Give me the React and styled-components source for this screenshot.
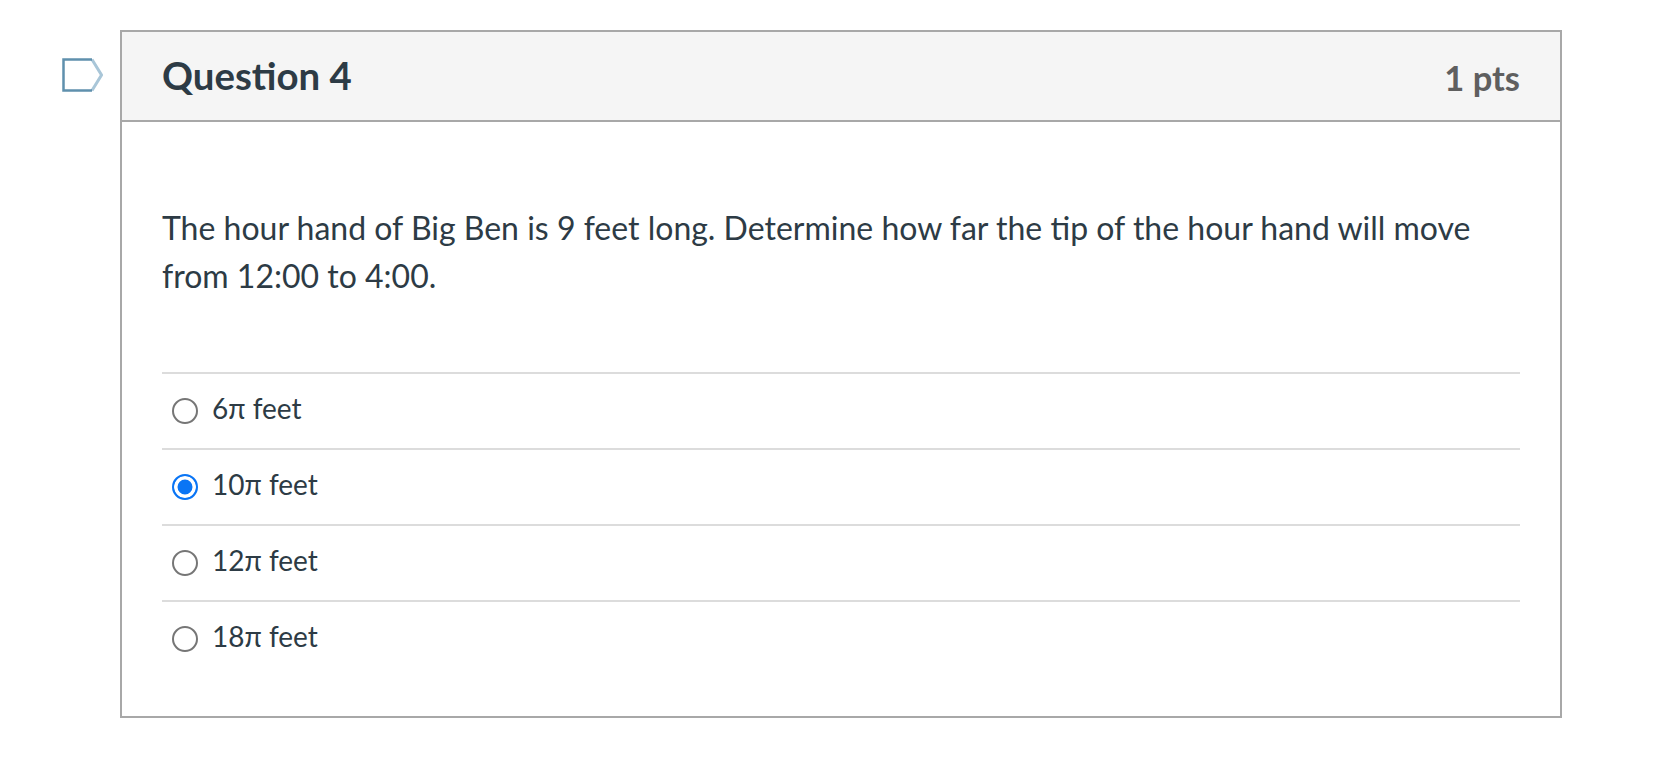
import styled, { createGlobalStyle } from "styled-components";

const GlobalStyle = createGlobalStyle`
  html, body {
    margin: 0;
    padding: 0;
    background: #fff;
    font-family: Lato, "Liberation Sans", sans-serif;
    color: #2d3b45;
  }
`;

const Page = styled.div`
  display: flex;
  align-items: flex-start;
  padding: 30px 0 0 62px;
`;

const FlagIcon = styled.svg`
  width: 41px;
  height: 34px;
  margin-top: 28px;
  margin-right: 17px;
  flex: none;
`;

const Card = styled.section`
  width: 1442px;
  height: 688px;
  box-sizing: border-box;
  border: 2px solid #a8a8a8;
`;

const Header = styled.header`
  display: flex;
  justify-content: space-between;
  align-items: center;
  height: 90px;
  box-sizing: border-box;
  padding: 0 40px;
  background: #f5f5f5;
  border-bottom: 2px solid #a8a8a8;
`;

const Title = styled.h2`
  margin: 0 0 2px;
  font-size: 38.4px;
  font-weight: 700;
  color: #2d3b45;
`;

const Points = styled.span`
  margin-top: 2px;
  font-size: 34.5px;
  font-weight: 700;
  color: #5f5f5f;
`;

const Body = styled.div`
  padding: 82px 40px 0;
`;

const Prompt = styled.p`
  margin: 0 0 72px;
  font-size: 32px;
  line-height: 48px;
`;

const Answer = styled.label`
  display: flex;
  align-items: center;
  gap: 14px;
  height: 76px;
  box-sizing: border-box;
  padding: 0 0 6px 10px;
  border-top: 2px solid #dcdcdc;
  font-size: 28px;
`;

const Radio = styled.span`
  width: 26px;
  height: 26px;
  margin-top: 6px;
  box-sizing: border-box;
  border-radius: 50%;
  border: ${(p) => (p.$checked ? "2.5px solid #0a75f5" : "2px solid #767676")};
  background: ${(p) => (p.$checked ? "#0a75f5" : "#fff")};
  box-shadow: ${(p) => (p.$checked ? "inset 0 0 0 3.5px #fff" : "none")};
  flex: none;
`;

const answers = [
  { text: "6π feet" },
  { text: "10π feet", checked: true },
  { text: "12π feet" },
  { text: "18π feet" },
];

export default function App() {
  return (
    <>
      <GlobalStyle />
      <Page>
        <FlagIcon viewBox="0 0 41 34" fill="none">
          <path d="M30 1.5L39.5 17L30 32.5" stroke="#a9c6d8" strokeWidth="3" />
          <path d="M30 1.5H1.5V32.5H30" stroke="#5f90ad" strokeWidth="2.5" />
        </FlagIcon>
        <Card>
          <Header>
            <Title>Question 4</Title>
            <Points>1 pts</Points>
          </Header>
          <Body>
            <Prompt>
              The hour hand of Big Ben is 9 feet long. Determine how far the tip of the hour hand will move from 12:00 to 4:00.
            </Prompt>
            {answers.map((a) => (
              <Answer key={a.text}>
                <Radio $checked={a.checked} />
                {a.text}
              </Answer>
            ))}
          </Body>
        </Card>
      </Page>
    </>
  );
}
